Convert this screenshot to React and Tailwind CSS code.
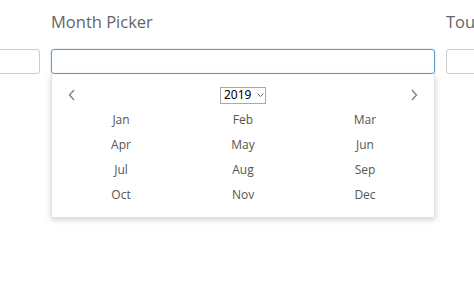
import React from "react";

const months = ["Jan","Feb","Mar","Apr","May","Jun","Jul","Aug","Sep","Oct","Nov","Dec"];

export default function App() {
  return (
    <div className="w-[474px] h-[301px] overflow-hidden bg-white" style={{ fontFamily: '"Open Sans", sans-serif' }}>
      <div className="flex gap-[11px] ml-[-344px] pt-[9px]">
        <div className="w-[384px] shrink-0">
          <div className="h-[26px]" />
          <div className="mt-[14px] h-[25px] border border-[#ccc] rounded-[3px]" />
        </div>
        <div className="w-[384px] shrink-0 relative">
          <div className="h-[26px] text-[16.5px] leading-[26px] text-[#666]">Month Picker</div>
          <div className="mt-[14px] h-[25px] border border-[#5a9bd4] rounded-[3px] shadow-[0_0_2px_rgba(90,155,212,0.5)]" />
          <div className="absolute left-0 top-[65px] w-[384px] bg-white border border-[#e2e2e2] border-t-0 shadow-[0_2px_6px_rgba(0,0,0,0.18)] pt-[9px] pb-[10px] px-2">
            <div className="h-[24px] flex items-center justify-between px-[8px]">
              <svg width="8" height="12" viewBox="0 0 8 12"><path d="M6 1 L1.5 6 L6 11" fill="none" stroke="#888" strokeWidth="1.5" /></svg>
              <div className="h-[17px] w-[46px] border border-[#a9a9a9] flex items-center pl-[3px] text-black leading-none" style={{ fontFamily: '"Noto Sans", sans-serif' }}>
                <span className="text-[12px] font-normal">2019</span>
                <svg className="shrink-0 ml-[6px]" width="7" height="5" viewBox="0 0 7 5"><path d="M0.5 0.5 L3.5 3.5 L6.5 0.5" fill="none" stroke="#666" strokeWidth="1" /></svg>
              </div>
              <svg width="8" height="12" viewBox="0 0 8 12"><path d="M2 1 L6.5 6 L2 11" fill="none" stroke="#888" strokeWidth="1.5" /></svg>
            </div>
            <div className="grid grid-cols-3">
              {months.map((m) => (
                <div key={m} className="h-[25px] flex items-center justify-center text-[12px] text-[#555]">{m}</div>
              ))}
            </div>
          </div>
        </div>
        <div className="w-[384px] shrink-0">
          <div className="h-[26px] text-[16.5px] leading-[26px] text-[#666]">Touch</div>
          <div className="mt-[14px] h-[25px] border border-[#ccc] rounded-[3px]" />
        </div>
      </div>
    </div>
  );
}
